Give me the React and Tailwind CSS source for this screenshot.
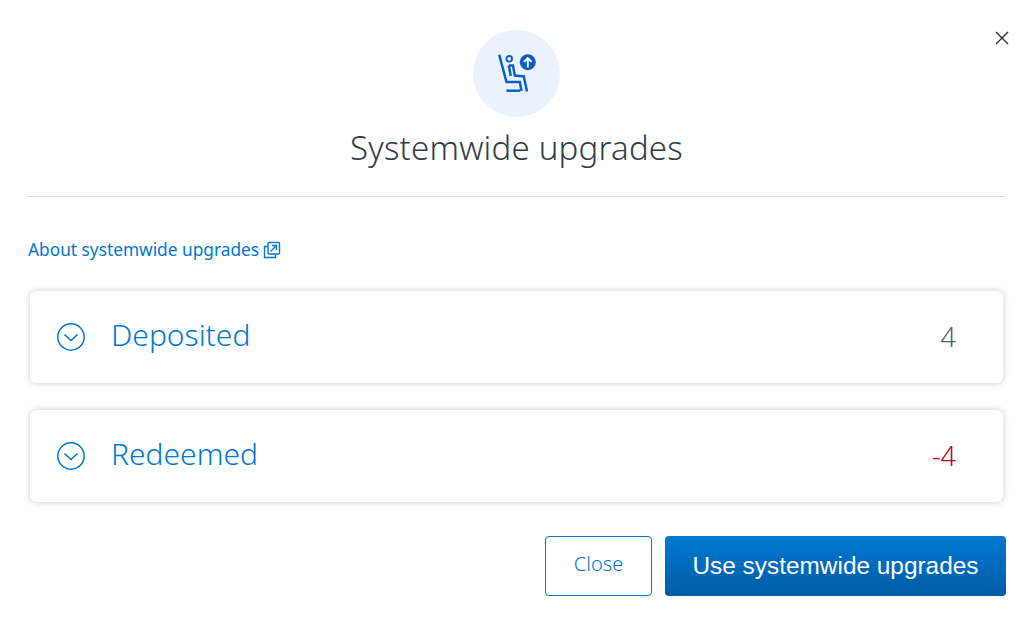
const sans = 'font-["Noto_Sans","Open_Sans",sans-serif]'

function SeatIcon() {
  return (
    <svg width="40" height="42" viewBox="0 0 40 42" fill="none" stroke="#0b5fc4" strokeWidth="2.5">
      <path d="M2.2 1.8 L9.5 29 H22.8 L24.5 38" />
      <path d="M9.5 37.7 H23" />
      <circle cx="12.2" cy="5.8" r="2.8" strokeWidth="1.9" />
      <path d="M11.8 12.5 H16 L17.8 22.5 L26.8 23.5 L30 38.5" />
      <path d="M11.8 12.5 L13.8 23" />
      <circle cx="30.8" cy="9.2" r="8" fill="#0b5fc4" stroke="none" />
      <path d="M30.8 14.5 V5 M27 8.8 L30.8 5 L34.6 8.8" stroke="#fff" strokeWidth="1.9" />
    </svg>
  )
}

function Chevron() {
  return (
    <svg width="30" height="30" viewBox="0 0 30 30" fill="none" stroke="#0078d2" strokeWidth="1.5">
      <circle cx="15" cy="15" r="13.2" />
      <path d="M8.5 12.5 L15 18.5 L21.5 12.5" strokeWidth="1.6" />
    </svg>
  )
}

function ExternalIcon() {
  return (
    <svg width="18" height="18" viewBox="0 0 18 18" fill="none" stroke="#0078d2" strokeWidth="1.4">
      <path d="M5 5.5 H1.5 V16.5 H12.5 V13" />
      <rect x="5" y="1.5" width="11.5" height="11.5" rx="1" />
      <path d="M7.5 10.5 L13.5 4.5 M9 4.5 H13.5 V9" />
    </svg>
  )
}

function AccordionRow({ label, count, countColor }) {
  return (
    <div className="flex h-[92px] items-center rounded-[6px] bg-white pl-[26px] pr-[47px] shadow-[0_0_6px_rgba(0,0,0,0.22)]">
      <Chevron />
      <span className="mb-[4px] ml-[25px] flex-1 text-[30px] font-light leading-none text-[#0078d2]">{label}</span>
      <span className={`mb-[2px] text-[27px] font-light leading-none ${countColor}`}>{count}</span>
    </div>
  )
}

export default function App() {
  return (
    <div className={`relative h-[618px] w-[1036px] overflow-hidden bg-white pl-[27px] pr-[30px] pt-[30px] ${sans}`}>
      {/* Close */}
      <button className="absolute right-[26px] top-[30px]">
        <svg width="16" height="16" viewBox="0 0 16 16" fill="none" stroke="#26303c" strokeWidth="1.4">
          <path d="M2 2 L14 14 M14 2 L2 14" />
        </svg>
      </button>

      {/* Header */}
      <div className="flex flex-col items-center border-b border-[#d9dcdf] pb-[28px]">
        <div className="flex h-[87px] w-[87px] items-center justify-center rounded-full bg-[#eaf3fd]">
          <SeatIcon />
        </div>
        <h1 className="mt-[11px] text-[33px] font-light leading-[40px] tracking-[0.2px] text-[#333d47]">Systemwide upgrades</h1>
      </div>

      {/* Link */}
      <a className="ml-[1px] mt-[41px] flex h-[24px] items-center gap-[4px] text-[17.3px] leading-none text-[#0078d2]">
        About systemwide upgrades
        <ExternalIcon />
      </a>

      {/* Rows */}
      <div className="mx-[3px] mt-[29px] flex flex-col gap-[27px]">
        <AccordionRow label="Deposited" count="4" countColor="text-[#4f6473]" />
        <AccordionRow label="Redeemed" count="-4" countColor="text-[#c4001a]" />
      </div>

      {/* Actions */}
      <div className="mt-[34px] flex justify-end gap-[13px]">
        <button className="h-[60px] w-[107px] rounded-[4px] border border-[#0078d2] bg-white pb-[4px] text-[20px] font-light text-[#0078d2]">
          Close
        </button>
        <button className='h-[60px] w-[341px] rounded-[4px] bg-gradient-to-b from-[#0078d2] to-[#005da6] font-["Liberation_Sans",sans-serif] text-[24.4px] text-white'>
          Use systemwide upgrades
        </button>
      </div>
    </div>
  )
}
